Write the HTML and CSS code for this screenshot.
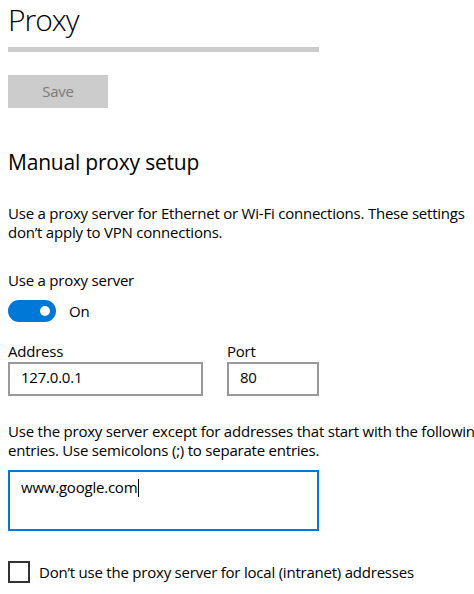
FILE: index.html
```html
<!DOCTYPE html>
<html lang="en">
<head>
<meta charset="utf-8">
<title>Proxy</title>
<link rel="stylesheet" href="styles.css">
</head>
<body>
<div class="page">
  <h1 class="title">Proxy</h1>
  <div class="bar"></div>
  <button class="save" type="button">Save</button>
  <h2 class="heading">Manual proxy setup</h2>
  <p class="desc">Use a proxy server for Ethernet or Wi-Fi connections. These settings<br>don’t apply to VPN connections.</p>
  <div class="label-row">Use a proxy server</div>
  <div class="toggle-row">
    <span class="toggle"><span class="knob"></span></span>
    <span class="toggle-text">On</span>
  </div>
  <div class="fields">
    <div class="field field-address">
      <div class="field-label">Address</div>
      <div class="input">127.0.0.1</div>
    </div>
    <div class="field field-port">
      <div class="field-label">Port</div>
      <div class="input">80</div>
    </div>
  </div>
  <p class="desc desc-wide">Use the proxy server except for addresses that start with the following<br>entries. Use semicolons (;) to separate entries.</p>
  <div class="textarea">www.google.com<span class="caret"></span></div>
  <div class="check-row">
    <span class="checkbox"></span>
    <span class="check-text">Don’t use the proxy server for local (intranet) addresses</span>
  </div>
</div>
</body>
</html>
```
FILE: styles.css
```css
html, body {
  margin: 0;
  padding: 0;
  background: #ffffff;
  overflow: hidden;
}
body {
  width: 474px;
  height: 594px;
  font-family: "Open Sans", "Noto Sans", sans-serif;
  color: #000000;
  letter-spacing: -0.22px;
}
.page {
  display: flex;
  flex-direction: column;
  align-items: flex-start;
  padding-left: 8px;
}
.title {
  margin: 0;
  font-size: 30px;
  font-weight: 300;
  letter-spacing: -1px;
  line-height: 40px;
  height: 40px;
}
.bar {
  margin-top: 7px;
  width: 311px;
  height: 5px;
  background: #cccccc;
}
.save {
  margin-top: 23px;
  width: 100px;
  height: 33px;
  border: 0;
  padding: 0;
  background: #cccccc;
  color: #7a7a7a;
  font-family: inherit;
  letter-spacing: inherit;
  font-size: 15px;
  line-height: 33px;
}
.heading {
  margin: 39px 0 0 0;
  font-size: 21px;
  font-weight: 400;
  letter-spacing: -0.2px;
  line-height: 30px;
  height: 30px;
}
.desc {
  margin: 27px 0 0 0;
  font-size: 15px;
  line-height: 19px;
  white-space: nowrap;
}
.label-row {
  margin-top: 29px;
  font-size: 15px;
  line-height: 19px;
}
.toggle-row {
  margin-top: 10px;
  display: flex;
  align-items: center;
  gap: 13px;
  height: 22px;
}
.toggle {
  position: relative;
  width: 48px;
  height: 22px;
  border-radius: 11px;
  background: #0078d7;
  flex: none;
}
.knob {
  position: absolute;
  right: 6px;
  top: 6px;
  width: 10px;
  height: 10px;
  border-radius: 50%;
  background: #ffffff;
}
.toggle-text {
  font-size: 15px;
  line-height: 22px;
}
.fields {
  margin-top: 20px;
  display: flex;
  gap: 24px;
}
.field {
  display: flex;
  flex-direction: column;
}
.field-address { width: 195px; }
.field-port { width: 92px; }
.field-label {
  font-size: 15px;
  line-height: 19px;
  height: 19px;
}
.input {
  margin-top: 1px;
  box-sizing: border-box;
  height: 34px;
  border: 2px solid #999999;
  padding: 0 0 3px 11px;
  font-size: 15px;
  line-height: 27px;
}
.desc-wide {
  margin-top: 26px;
}
.textarea {
  margin-top: 10px;
  box-sizing: border-box;
  width: 311px;
  height: 61px;
  border: 2px solid #0078d7;
  padding: 6px 0 0 11px;
  font-size: 15px;
  line-height: 19px;
}
.caret {
  display: inline-block;
  width: 1px;
  height: 18px;
  background: #000000;
  vertical-align: -4px;
  margin-left: 1px;
}
.check-row {
  margin-top: 30px;
  display: flex;
  align-items: center;
  gap: 9px;
  height: 22px;
}
.checkbox {
  box-sizing: border-box;
  width: 22px;
  height: 22px;
  border: 2px solid #333333;
  flex: none;
}
.check-text {
  font-size: 15px;
  line-height: 22px;
}
```
